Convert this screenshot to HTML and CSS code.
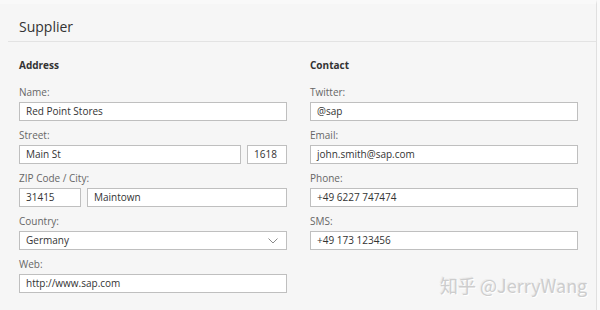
FILE: index.html
```html
<!DOCTYPE html>
<html lang="en">
<head>
  <meta charset="UTF-8" />
  <meta name="viewport" content="width=device-width, initial-scale=1.0"/>
  <title>Supplier</title>
  <link rel="stylesheet" href="styles.css">
</head>
<body>
  <div class="page">
    <header class="toolbar">
      <h1>Supplier</h1>
    </header>
    <div class="form">
      <section class="group">
        <h2>Address</h2>
        <div class="field">
          <label>Name:</label>
          <div class="inputs"><div class="box">Red Point Stores</div></div>
        </div>
        <div class="field">
          <label>Street:</label>
          <div class="inputs">
            <div class="box grow">Main St</div>
            <div class="box house">1618</div>
          </div>
        </div>
        <div class="field">
          <label>ZIP Code / City:</label>
          <div class="inputs">
            <div class="box zip">31415</div>
            <div class="box grow">Maintown</div>
          </div>
        </div>
        <div class="field">
          <label>Country:</label>
          <div class="inputs">
            <div class="box select">
              <span>Germany</span>
              <svg width="10" height="6" viewBox="0 0 10 6"><polyline points="0.5,0.5 5,5 9.5,0.5" fill="none" stroke="#8a8a8a" stroke-width="1"/></svg>
            </div>
          </div>
        </div>
        <div class="field">
          <label>Web:</label>
          <div class="inputs"><div class="box">http://www.sap.com</div></div>
        </div>
      </section>
      <section class="group">
        <h2>Contact</h2>
        <div class="field">
          <label>Twitter:</label>
          <div class="inputs"><div class="box">@sap</div></div>
        </div>
        <div class="field">
          <label>Email:</label>
          <div class="inputs"><div class="box">john.smith@sap.com</div></div>
        </div>
        <div class="field">
          <label>Phone:</label>
          <div class="inputs"><div class="box">+49 6227 747474</div></div>
        </div>
        <div class="field">
          <label>SMS:</label>
          <div class="inputs"><div class="box">+49 173 123456</div></div>
        </div>
      </section>
    </div>
    <div class="watermark">知乎 @JerryWang</div>
  </div>
</body>
</html>
```

FILE: styles.css
```css
body {
  margin: 0;
  background: #fafafa;
  font-family: "Open Sans", "Noto Sans", Arial, sans-serif;
  color: #333;
}
.page {
  position: relative;
  width: 597px;
  height: 310px;
  box-sizing: border-box;
  background: #f6f6f6;
  border-right: 1px solid #e0e0e0;
  border-top: 4px solid #f9f9f9;
}
.toolbar {
  margin-left: 8px;
  height: 38px;
  box-sizing: border-box;
  border-bottom: 1px solid #e3e3e3;
  padding: 13px 0 0 11px;
}
.toolbar h1 {
  margin: 0;
  font-size: 14px;
  line-height: 20px;
  font-weight: normal;
  color: #333;
}
.form {
  display: flex;
  gap: 23px;
  padding: 16px 0 0 19px;
}
.group {
  width: 268px;
}
.group h2 {
  margin: 0 0 13px;
  font-size: 10px;
  line-height: 14px;
  font-weight: bold;
  color: #333;
}
.field {
  margin-bottom: 7px;
}
.field label {
  display: block;
  font-size: 10px;
  line-height: 14px;
  color: #666;
  margin-bottom: 3px;
}
.inputs {
  display: flex;
  gap: 6px;
}
.box {
  flex: 1;
  height: 19px;
  box-sizing: border-box;
  background: #fff;
  border: 1px solid #bfbfbf;
  padding: 0 6px;
  font-size: 10px;
  line-height: 17px;
  color: #333;
  white-space: nowrap;
}
.box.grow {
  flex: 1;
}
.box.house {
  flex: 0 0 40px;
}
.box.zip {
  flex: 0 0 62px;
}
.box.select {
  display: flex;
  align-items: center;
  justify-content: space-between;
  padding-right: 8px;
}
.watermark {
  position: absolute;
  left: 440px;
  top: 269px;
  font-family: "Noto Sans CJK SC", "Noto Sans", sans-serif;
  font-size: 18px;
  line-height: 24px;
  color: #cdcdcd;
  text-shadow: 1px 1px 0 #fff, -1px -1px 0 #ececec;
  white-space: nowrap;
}
```
